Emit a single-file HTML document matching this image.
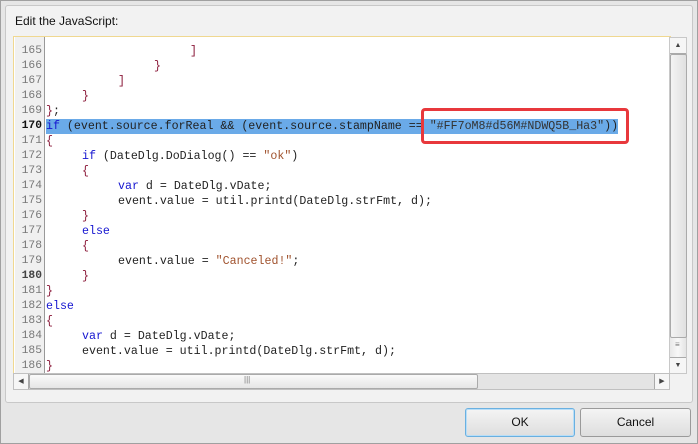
<!DOCTYPE html>
<html><head><meta charset="utf-8"><style>
body{margin:0;width:698px;height:444px;background:#e9e9e9;font-family:"Liberation Sans",sans-serif;position:relative;overflow:hidden}
.outer{position:absolute;left:0;top:0;width:696px;height:442px;border:1px solid #a0a0a0;background:#e6e6e6}
.panel{position:absolute;left:5px;top:5px;width:686px;height:396px;background:#f2f2f2;border:1px solid #c8c8c8;border-radius:3px}
.title{position:absolute;left:15px;top:14px;font-size:12px;color:#111}
.ed{position:absolute;left:13px;top:36px;width:656px;height:336px;border:1px solid #f0d890;background:#fff;overflow:hidden}
.gut{position:absolute;left:1px;top:0;width:29px;height:336px;background:#f0f0f0;border-right:1px solid #999}
.ln{position:absolute;left:0;width:28px;text-align:right;font:11.3px/15px "Liberation Mono",monospace;color:#777}
.cl{position:absolute;left:32px;font:11.63px/15px "Liberation Mono",monospace;color:#222;white-space:pre}
.k{color:#1515d0}.s{color:#a0522d}.b{color:#8b1a3a}
.hl{background:#6aaae8}
.vs{position:absolute;left:669px;top:37px;width:16px;height:335px;background:linear-gradient(90deg,#e8e8e8,#f8f8f8,#e4e4e4);border:1px solid #c8c8c8}
.hs{position:absolute;left:13px;top:373px;width:655px;height:15px;background:#e4e4e4;border:1px solid #c0c0c0}
.btn{position:absolute;top:408px;height:27px;border:1px solid #9a9a9a;border-radius:3px;background:linear-gradient(#f4f4f4,#dedede);font-size:12px;text-align:center;line-height:27px;color:#111}
.red{position:absolute;left:421px;top:108px;width:202px;height:30px;border:3px solid #e8383c;border-radius:4px}
.in{position:absolute;left:0;top:2px;width:656px;height:340px}
</style></head><body>
<div class="outer"></div>
<div class="panel"></div>
<div class="title">Edit the JavaScript:</div>
<div class="ed">
<div class="gut"></div>
<div class="in">
<div class="ln" style="top:5px">165</div>
<div class="ln" style="top:20px">166</div>
<div class="ln" style="top:35px">167</div>
<div class="ln" style="top:50px">168</div>
<div class="ln" style="top:65px">169</div>
<div class="ln" style="top:80px;font-weight:bold;color:#111">170</div>
<div class="ln" style="top:95px">171</div>
<div class="ln" style="top:110px">172</div>
<div class="ln" style="top:125px">173</div>
<div class="ln" style="top:140px">174</div>
<div class="ln" style="top:155px">175</div>
<div class="ln" style="top:170px">176</div>
<div class="ln" style="top:185px">177</div>
<div class="ln" style="top:200px">178</div>
<div class="ln" style="top:215px">179</div>
<div class="ln" style="top:230px;font-weight:bold;color:#444">180</div>
<div class="ln" style="top:245px">181</div>
<div class="ln" style="top:260px">182</div>
<div class="ln" style="top:275px">183</div>
<div class="ln" style="top:290px">184</div>
<div class="ln" style="top:305px">185</div>
<div class="ln" style="top:320px">186</div>
<div class="cl b" style="top:-10px;left:214px">'</div>
<div class="cl b" style="top:5px;left:176px">]</div>
<div class="cl b" style="top:20px;left:140px">}</div>
<div class="cl b" style="top:35px;left:104px">]</div>
<div class="cl b" style="top:50px;left:68px">}</div>
<div class="cl" style="top:65px"><span class="b">}</span>;</div>
<div class="cl hl" style="top:80px"><span class="k">if</span> (event.source.forReal &amp;&amp; (event.source.stampName == <span class="s" style="color:#333">"#FF7oM8#d56M#NDWQ5B_Ha3"</span>))</div>
<div class="cl b" style="top:95px">{</div>
<div class="cl" style="top:110px;left:68px"><span class="k">if</span> (DateDlg.DoDialog() == <span class="s">"ok"</span>)</div>
<div class="cl b" style="top:125px;left:68px">{</div>
<div class="cl" style="top:140px;left:104px"><span class="k">var</span> d = DateDlg.vDate;</div>
<div class="cl" style="top:155px;left:104px">event.value = util.printd(DateDlg.strFmt, d);</div>
<div class="cl b" style="top:170px;left:68px">}</div>
<div class="cl k" style="top:185px;left:68px">else</div>
<div class="cl b" style="top:200px;left:68px">{</div>
<div class="cl" style="top:215px;left:104px">event.value = <span class="s">"Canceled!"</span>;</div>
<div class="cl b" style="top:230px;left:68px">}</div>
<div class="cl b" style="top:245px">}</div>
<div class="cl k" style="top:260px">else</div>
<div class="cl b" style="top:275px">{</div>
<div class="cl" style="top:290px;left:68px"><span class="k">var</span> d = DateDlg.vDate;</div>
<div class="cl" style="top:305px;left:68px">event.value = util.printd(DateDlg.strFmt, d);</div>
<div class="cl b" style="top:320px">}</div>
</div>
</div>
<div class="red"></div>
<div class="vs">
<div style="position:absolute;left:0;top:0;width:16px;height:15px;border-bottom:1px solid #aaa;background:#f6f6f6;font-size:7px;text-align:center;line-height:15px;color:#444">▲</div>
<div style="position:absolute;left:0;top:16px;width:15px;height:282px;border:1px solid #aaa;border-radius:2px;background:linear-gradient(90deg,#f4f4f4,#e0e0e0);"></div>
<div style="position:absolute;left:5px;top:302px;font-size:8px;color:#777">≡</div>
<div style="position:absolute;left:0;top:319px;width:16px;height:15px;border-top:1px solid #aaa;background:#f6f6f6;font-size:7px;text-align:center;line-height:15px;color:#444">▼</div>
</div>
<div class="hs">
<div style="position:absolute;left:0;top:0;width:14px;height:15px;font-size:7px;line-height:15px;text-align:center;color:#444;border-right:1px solid #aaa;background:#f6f6f6">◀</div>
<div style="position:absolute;left:15px;top:0;width:447px;height:13px;border:1px solid #aaa;border-radius:2px;background:linear-gradient(#fafafa,#e6e6e6)"></div>
<div style="position:absolute;left:230px;top:1px;font-size:8px;color:#777">|||</div>
<div style="position:absolute;right:0;top:0;width:14px;height:15px;font-size:7px;line-height:15px;text-align:center;color:#444;border-left:1px solid #aaa;background:#f6f6f6">▶</div>
</div>
<div class="btn" style="left:465px;width:108px;border-color:#6ab0e0;box-shadow:inset 0 0 0 1px #b8def8">OK</div>
<div class="btn" style="left:580px;width:109px">Cancel</div>
</body></html>
